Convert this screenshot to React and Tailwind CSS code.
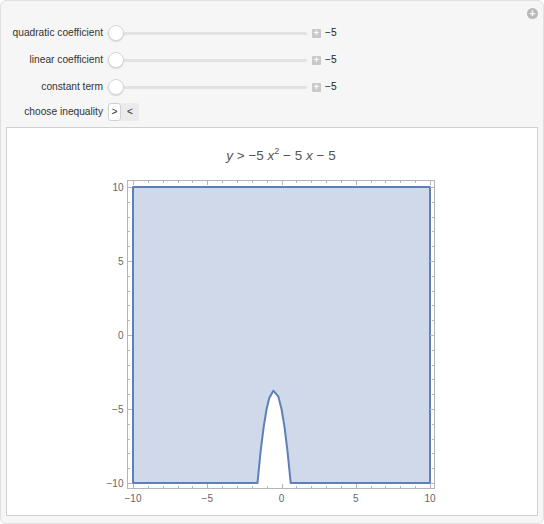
import React from "react";

const X = (x) => 281.5 + x * 14.85;
const Y = (y) => 335 - y * 14.8;

const curveXs = [-1.618, -1.4, -1.2, -1.0, -0.82, -0.55, -0.21, 0, 0.2, 0.4, 0.618];

function regionPath() {
  const pts = [[-10, -10]];
  curveXs.forEach((x) => pts.push([x, Math.max(-10, -5 * x * x - 5 * x - 5)]));
  pts.push([10, -10], [10, 10], [-10, 10]);
  return (
    pts
      .map((p, i) => (i === 0 ? "M" : "L") + X(p[0]).toFixed(1) + " " + Y(p[1]).toFixed(1))
      .join(" ") + " Z"
  );
}

const ticks = Array.from({ length: 21 }, (_, i) => i - 10);
const labels = [-10, -5, 0, 5, 10];
const fmt = (v) => (v < 0 ? "\u2212" + Math.abs(v) : String(v));

function Plot() {
  const left = 127.5;
  const right = 434.5;
  const top = 180.5;
  const bottom = 488.5;
  return (
    <svg width="530" height="340" viewBox="7 175 530 340" className="block">
      <path d={regionPath()} fill="#cfd9e9" stroke="#5e81b5" strokeWidth="2" strokeLinejoin="round" />
      <rect x={left} y={top} width={right - left} height={bottom - top} fill="none" stroke="#b5b5b5" strokeWidth="1" />
      {ticks.map((t) => {
        const len = t % 5 === 0 ? 4.5 : 2.5;
        const px = Math.round(X(t)) + 0.5;
        const py = Math.round(Y(t)) + 0.5;
        return (
          <g key={t} stroke="#b5b5b5" strokeWidth="1">
            <line x1={px} y1={bottom} x2={px} y2={bottom - len} />
            <line x1={px} y1={top} x2={px} y2={top + len} />
            <line x1={left} y1={py} x2={left + len} y2={py} />
            <line x1={right} y1={py} x2={right - len} y2={py} />
          </g>
        );
      })}
      {labels.map((v) => (
        <text
          key={"x" + v}
          x={X(v)}
          y={501.5}
          textAnchor="middle"
          fontSize="10"
          fill="#666"
          fontFamily="'Liberation Sans', Arial, sans-serif"
        >
          {fmt(v)}
        </text>
      ))}
      {labels.map((v) => (
        <text
          key={"y" + v}
          x={123.5}
          y={Y(v) + 3.5}
          textAnchor="end"
          fontSize="10"
          fill="#666"
          fontFamily="'Liberation Sans', Arial, sans-serif"
        >
          {fmt(v)}
        </text>
      ))}
    </svg>
  );
}

function SliderRow({ label }) {
  return (
    <div className="flex h-[18px] items-center">
      <div className="w-[102px] text-right">{label}</div>
      <div className="relative ml-[4px] h-[18px] w-[200px]">
        <div className="absolute left-0 right-0 top-[8px] h-[3px] rounded-full bg-[#e2e2e2]" />
        <div className="absolute left-[1px] top-[1px] h-[16px] w-[16px] rounded-full border border-[#d6d6d6] bg-white shadow-[0_1px_1px_rgba(0,0,0,0.12)]" />
      </div>
      <div className="ml-[5px] flex h-[9px] w-[9px] items-center justify-center rounded-[1px] bg-[#c9c9c9] text-[9px] leading-none font-bold text-white">
        +
      </div>
      <div className="ml-[4px] text-[#222]">−5</div>
    </div>
  );
}

export default function App() {
  return (
    <div
      className="relative h-[524px] w-[544px] rounded-[6px] border border-[#e0e0e0] bg-[#f6f6f6] text-[10.2px] text-[#333]"
      style={{ fontFamily: "'Liberation Sans', Arial, sans-serif" }}
    >
      <div className="absolute right-[5px] top-[7px] flex h-[11px] w-[11px] items-center justify-center rounded-full bg-[#b9b9b9] text-[10px] leading-none font-bold text-white">
        +
      </div>
      <div className="flex flex-col pt-[23px]">
        <div className="flex flex-col gap-[9px]">
          <SliderRow label="quadratic coefficient" />
          <SliderRow label="linear coefficient" />
          <SliderRow label="constant term" />
        </div>
        <div className="mt-[7px] flex h-[18px] items-center">
          <div className="w-[102px] text-right">choose inequality</div>
          <div className="ml-[5px] flex h-[18px]">
            <div className="flex w-[13px] items-center justify-center rounded-[3px] border border-[#cfcfcf] bg-white">
              &gt;
            </div>
            <div className="flex w-[18px] items-center justify-center rounded-r-[3px] bg-[#ebebeb]">&lt;</div>
          </div>
        </div>
        <div className="mx-[5px] mt-[6px] flex flex-col border border-[#cfcfcf] bg-white">
          <div className="h-[47px] pl-[18px] pt-[20px] text-center text-[13.5px] leading-[16px] text-[#555]">
            <i>y</i> &gt; −5 <i>x</i>
            <sup className="top-[-6px] text-[9px]">2</sup> − 5 <i>x</i> − 5
          </div>
          <Plot />
        </div>
      </div>
    </div>
  );
}
